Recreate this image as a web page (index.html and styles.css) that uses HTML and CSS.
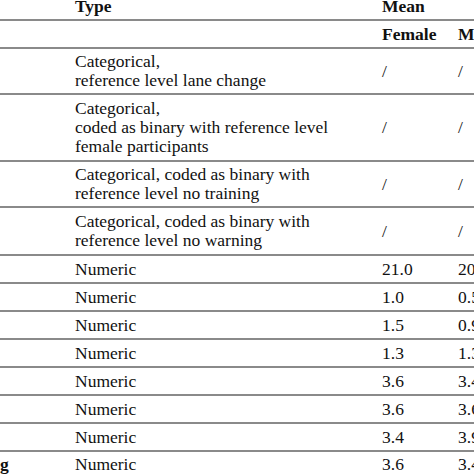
FILE: index.html
```html
<!DOCTYPE html>
<html>
<head>
<meta charset="utf-8">
<link rel="stylesheet" href="styles.css">
</head>
<body>
<div class="frame">
<table class="tbl">
  <colgroup>
    <col class="c-var"><col class="c-type"><col class="c-f"><col class="c-m">
  </colgroup>
  <tr class="h1"><th></th><th>Type</th><th>Mean</th><th></th></tr>
  <tr class="h2"><th></th><th></th><th>Female</th><th>Male</th></tr>
  <tr class="r2"><td></td><td>Categorical,<br>reference level lane change</td><td class="n">/</td><td class="n">/</td></tr>
  <tr class="r3"><td></td><td>Categorical,<br>coded as binary with reference level<br>female participants</td><td class="n">/</td><td class="n">/</td></tr>
  <tr class="r2"><td></td><td>Categorical, coded as binary with<br>reference level no training</td><td class="n">/</td><td class="n">/</td></tr>
  <tr class="r2b"><td></td><td>Categorical, coded as binary with<br>reference level no warning</td><td class="n">/</td><td class="n">/</td></tr>
  <tr class="r1"><td></td><td>Numeric</td><td>21.0</td><td>20.4</td></tr>
  <tr class="r1"><td></td><td>Numeric</td><td>1.0</td><td>0.5</td></tr>
  <tr class="r1"><td></td><td>Numeric</td><td>1.5</td><td>0.9</td></tr>
  <tr class="r1"><td></td><td>Numeric</td><td>1.3</td><td>1.3</td></tr>
  <tr class="r1"><td></td><td>Numeric</td><td>3.6</td><td>3.4</td></tr>
  <tr class="r1"><td></td><td>Numeric</td><td>3.6</td><td>3.6</td></tr>
  <tr class="r1"><td></td><td>Numeric</td><td>3.4</td><td>3.9</td></tr>
  <tr class="last"><td class="var">g</td><td>Numeric</td><td>3.6</td><td>3.4</td></tr>
</table>
</div>
</body>
</html>
```

FILE: styles.css
```css
html, body {
  margin: 0;
  padding: 0;
  background: #ffffff;
  overflow: hidden;
}
.frame {
  width: 474px;
  height: 474px;
  overflow: hidden;
}
.tbl {
  border-collapse: collapse;
  table-layout: fixed;
  width: 540px;
  margin-top: -6px;
  font-family: "Liberation Serif", "DejaVu Serif", serif;
  font-size: 17.5px;
  line-height: 19px;
  color: #111111;
}
.c-var { width: 75px; }
.c-type { width: 307px; }
.c-f { width: 76px; }
.c-m { width: 82px; }
.tbl th, .tbl td {
  padding: 0;
  text-align: left;
  vertical-align: middle;
  white-space: nowrap;
  border-bottom: 2px solid #8a8a8a;
}
.tbl th { font-weight: bold; }
.h1 th { height: 25px; }
.h2 th { height: 26px; }
.r1 td { height: 26px; }
.r2 td { height: 44px; }
.r2b td { height: 46px; }
.r3 td { height: 65px; }
.last td { height: 25px; border-bottom: none; }
.n { padding-left: 1px; }
.var { font-weight: bold; }
```
